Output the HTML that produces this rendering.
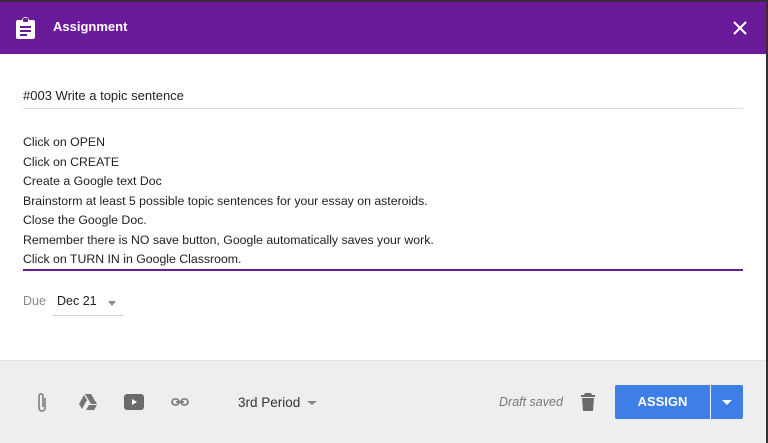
<!DOCTYPE html>
<html><head><style>
body{margin:0;width:768px;height:442px;overflow:hidden;background:#3a2a3a;font-family:"Liberation Sans",Arial,sans-serif;position:relative}
.card{position:absolute;left:0;top:2px;width:766px;height:440px;background:#fff}
.hdr{position:absolute;left:0;top:0;width:766px;height:52px;background:#6a1b9a}
.t{position:absolute;font-size:12.5px;color:#212121;white-space:nowrap}
.foot{position:absolute;left:0;top:358px;width:766px;height:82px;background:#eee;border-top:1px solid #e2e2e2}
</style></head><body>
<div class="card">
<div class="hdr">
<svg style="position:absolute;left:16px;top:15px" width="19" height="22" viewBox="0 0 19 22"><path d="M2 3h4a3.5 3 0 0 1 7 0h4a2 2 0 0 1 2 2v15a2 2 0 0 1-2 2H2a2 2 0 0 1-2-2V5a2 2 0 0 1 2-2z" fill="#fff"/><rect x="7" y="1" width="5" height="4" rx="1" fill="#6a1b9a"/><rect x="4" y="9" width="11" height="2" fill="#6a1b9a"/><rect x="4" y="13" width="11" height="2" fill="#6a1b9a"/><rect x="4" y="17" width="7" height="2" fill="#6a1b9a"/></svg>
<div class="t" style="left:53px;top:17px;color:#fff;font-weight:bold;font-size:13px">Assignment</div>
<svg style="position:absolute;left:733px;top:19px" width="14" height="14"><path d="M1 1L13 13M13 1L1 13" stroke="#fff" stroke-width="2"/></svg>
</div>
<div class="t" style="left:23px;top:86px;font-size:13px">#003 Write a topic sentence</div>
<div style="position:absolute;left:23px;top:106px;width:720px;height:1px;background:#dcdcdc"></div>
<div class="t" style="left:23px;top:131px;line-height:19.5px;font-size:12.3px">Click on OPEN<br>Click on CREATE<br>Create a Google text Doc<br>Brainstorm at least 5 possible topic sentences for your essay on asteroids.<br>Close the Google Doc.<br>Remember there is NO save button, Google automatically saves your work.<br>Click on TURN IN in Google Classroom.</div>
<div style="position:absolute;left:23px;top:267px;width:720px;height:2px;background:#6a1b9a"></div>
<div class="t" style="left:23px;top:292px;color:#888">Due</div>
<div class="t" style="left:57px;top:292px">Dec 21</div>
<div style="position:absolute;left:108px;top:299px;border:4px solid transparent;border-top:5px solid #888;border-bottom:0"></div>
<div style="position:absolute;left:53px;top:313px;width:70px;height:1px;background:#d0d0d0"></div>
<div class="foot">
<svg style="position:absolute;left:36px;top:31px" width="12" height="22" viewBox="0 0 12 22"><path d="M9 6v10a3 3 0 0 1-6 0V4a2 2 0 0 1 4 0v11" fill="none" stroke="#777" stroke-width="1.5"/></svg>
<svg style="position:absolute;left:79px;top:33px" width="18" height="16" viewBox="0 0 18 16"><path d="M6 0h6l6 10h-6zM5 1l3 5-5 9-3-5zM7 16l3-5h8l-3 5z" fill="#757575"/></svg>
<svg style="position:absolute;left:124px;top:33px" width="20" height="16"><rect width="20" height="16" rx="3" fill="#6b6b6b"/><path d="M8 5l5 3-5 3z" fill="#fff"/></svg>
<svg style="position:absolute;left:171px;top:37px" width="18" height="8"><rect x="1" y="1" width="7" height="6" rx="3" fill="none" stroke="#777" stroke-width="1.6"/><rect x="10" y="1" width="7" height="6" rx="3" fill="none" stroke="#777" stroke-width="1.6"/><path d="M5 4h8" stroke="#777" stroke-width="1.6"/></svg>
<div class="t" style="left:238px;top:34px;font-size:13.5px;color:#333">3rd Period</div>
<div style="position:absolute;left:307px;top:40px;border:4px solid transparent;border-top:4px solid #888;border-bottom:0;border-left-width:5px;border-right-width:5px"></div>
<div class="t" style="left:499px;top:34px;font-style:italic;color:#777">Draft saved</div>
<svg style="position:absolute;left:581px;top:32px" width="14" height="18" viewBox="0 0 14 18"><path d="M4 0h6l1 2h3v2H0V2h3zM1 5h12l-1 13H2z" fill="#6b6b6b"/></svg>
<div style="position:absolute;left:615px;top:24px;width:95px;height:34px;background:#3d7fe6;border-radius:2px 0 0 2px;color:#fff;font-weight:bold;font-size:13px;text-align:center;line-height:34px">ASSIGN</div>
<div style="position:absolute;left:711px;top:24px;width:32px;height:34px;background:#3d7fe6;border-radius:0 2px 2px 0"></div>
<div style="position:absolute;left:722px;top:39px;border:5px solid transparent;border-top:5px solid #fff;border-bottom:0"></div>
</div>
</div>
</body></html>
